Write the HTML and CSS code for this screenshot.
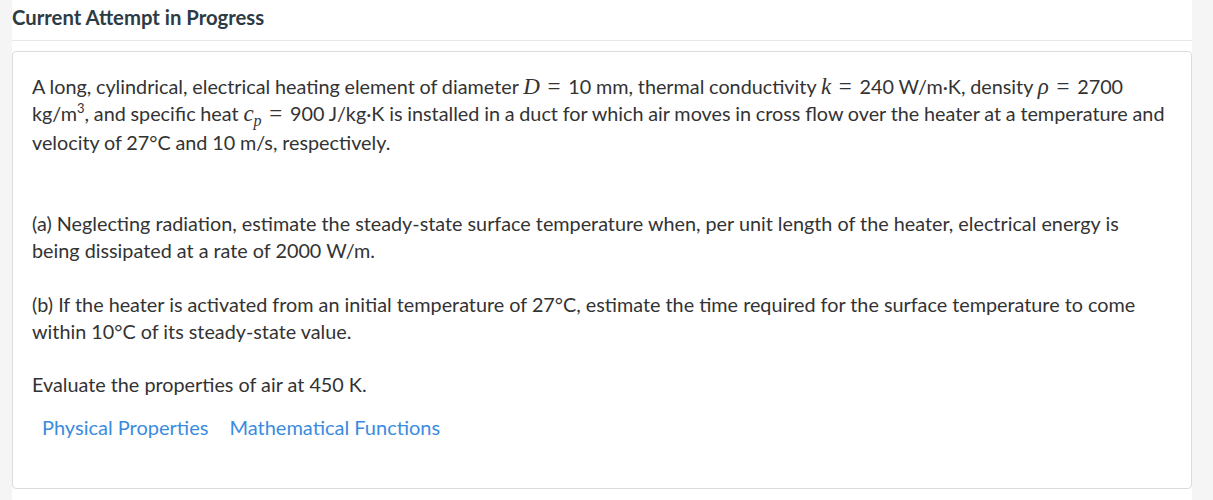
FILE: index.html
```html
<!DOCTYPE html>
<html>
<head>
<meta charset="utf-8">
<link rel="stylesheet" href="styles.css">
</head>
<body>
<div class="page">
  <div class="gutter"></div>
  <main class="main">
    <h1 class="title">Current Attempt in Progress</h1>
    <div class="card">
      <p class="para intro">A long, cylindrical, electrical heating element of diameter <span class="m"><i>D</i> <span class="eq">=</span> </span>10 mm, thermal conductivity <span class="m"><i>k</i> <span class="eq">=</span> </span>240 W/m·K, density <span class="m"><i>ρ</i> <span class="eq">=</span> </span>2700 kg/m<sup>3</sup>, and specific heat <span class="m"><i>c<sub>p</sub></i> <span class="eq">=</span> </span>900 J/kg·K is installed in a duct for which air moves in cross flow over the heater at a temperature and velocity of 27°C and 10 m/s, respectively.</p>
      <p class="para gap-a">(a) Neglecting radiation, estimate the steady-state surface temperature when, per unit length of the heater, electrical energy is being dissipated at a rate of 2000 W/m.</p>
      <p class="para gap-b">(b) If the heater is activated from an initial temperature of 27°C, estimate the time required for the surface temperature to come within 10°C of its steady-state value.</p>
      <p class="para gap-c">Evaluate the properties of air at 450 K.</p>
      <div class="links">
        <a class="link">Physical Properties</a>
        <a class="link">Mathematical Functions</a>
      </div>
    </div>
  </main>
  <div class="gutter"></div>
</div>
</body>
</html>
```
FILE: styles.css
```css
html, body {
  margin: 0;
  padding: 0;
  background: #f5f5f5;
}
body {
  font-family: Lato, "Open Sans", sans-serif;
  color: #333;
}
.page {
  display: flex;
  height: 500px;
}
.gutter {
  width: 12px;
  flex: 0 0 12px;
  background: #f5f5f5;
}
.gutter:last-child {
  flex: 0 0 21px;
}
.main {
  flex: 1;
  background: #fff;
  display: flex;
  flex-direction: column;
}
.title {
  margin: 0;
  font-size: 20.3px;
  font-weight: bold;
  color: #2d3b45;
  line-height: 24px;
  padding: 5px 0 11px 0;
  border-bottom: 1px solid #e8e8e8;
}
.card {
  margin-top: 10px;
  border: 1px solid #dcdcdc;
  border-radius: 4px;
  padding: 21px 22px 0 19px;
  height: 438px;
  box-sizing: border-box;
}
.para {
  margin: 0;
  font-size: 19.8px;
  line-height: 27px;
  color: #333;
}
.intro {
  word-spacing: -0.3px;
}
.para sup {
  font-size: 13px;
  line-height: 0;
  vertical-align: 8px;
}
.m {
  font-family: "Liberation Serif", "DejaVu Serif", serif;
  font-size: 23px;
  line-height: 0;
  word-spacing: 0;
}
.m i {
  font-style: italic;
}
.m sub {
  display: inline-block;
  font-size: 16px;
  line-height: 1;
  vertical-align: -5px;
}
.eq {
  font-style: normal;
  margin: 0 2px;
}
.gap-a { margin-top: 54px; }
.gap-b { margin-top: 27px; }
.gap-c { margin-top: 26px; }
.links {
  display: flex;
  gap: 21px;
  padding-left: 10px;
  margin-top: 16px;
}
.link {
  font-size: 20px;
  line-height: 27px;
  color: #3a8be0;
  cursor: pointer;
}
```
